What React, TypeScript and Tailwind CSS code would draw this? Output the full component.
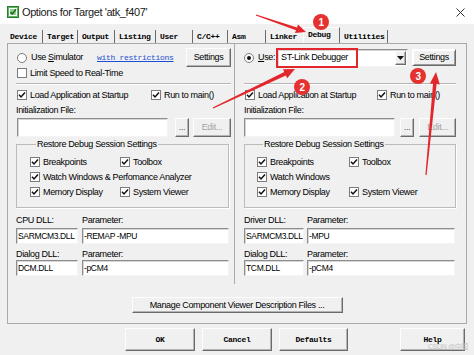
const ui = "font-['Liberation_Sans',Arial,sans-serif] text-[9px] tracking-[-0.35px] leading-none text-black";
const mono = "font-['Liberation_Mono','Courier_New',monospace] text-[8px] tracking-[-0.3px] leading-none";

const raised =
  'bg-[#f0f0f0] border border-t-[#fdfdfd] border-l-[#fdfdfd] border-r-[#6b6b6b] border-b-[#6b6b6b] shadow-[inset_-1px_-1px_0_#b4b4b4]';
const sunken =
  'bg-white border border-t-[#8d8d8d] border-l-[#8d8d8d] border-r-[#f4f4f4] border-b-[#f4f4f4] shadow-[inset_1px_1px_0_#d6d6d6]';

const tabs = [
  { name: 'Device', w: 'w-[37px]' },
  { name: 'Target', w: 'w-[35px]' },
  { name: 'Output', w: 'w-[37px]' },
  { name: 'Listing', w: 'w-[41px]' },
  { name: 'User', w: 'w-[37px]' },
  { name: 'C/C++', w: 'w-[35px]' },
  { name: 'Asm', w: 'w-[38px]' },
  { name: 'Linker', w: 'w-[37px]' },
  { name: 'Debug', w: 'w-[37px]', selected: true },
  { name: 'Utilities', w: 'w-[48px]' },
];

function CheckBox({ label, checked = true, className = '' }: { label: string; checked?: boolean; className?: string }) {
  return (
    <div className={`flex items-center h-[12px] ${className}`}>
      <span className="w-[10px] h-[10px] shrink-0 bg-white border border-[#7c7c7c] flex items-center justify-center">
        {checked && (
          <svg width="8" height="8" viewBox="0 0 8 8">
            <path d="M1 3.8 L3 6 L7 1.5" stroke="#111" strokeWidth="1.5" fill="none" />
          </svg>
        )}
      </span>
      <span className="ml-[3px] whitespace-nowrap">{label}</span>
    </div>
  );
}

function Radio({ children, checked = false, className = '' }: { children: React.ReactNode; checked?: boolean; className?: string }) {
  return (
    <div className={`flex items-center ${className}`}>
      <span className="w-[10px] h-[10px] shrink-0 rounded-full bg-white border border-[#7c7c7c] flex items-center justify-center">
        {checked && <span className="w-[4px] h-[4px] rounded-full bg-[#111]" />}
      </span>
      <span className="ml-[4px] whitespace-nowrap">{children}</span>
    </div>
  );
}

function Btn({ children, className = '' }: { children: React.ReactNode; className?: string }) {
  return <div className={`flex items-center justify-center shrink-0 ${raised} ${className}`}>{children}</div>;
}

function Field({ value, className = '' }: { value?: string; className?: string }) {
  return (
    <div className={`flex items-center pl-[1px] shrink-0 overflow-hidden whitespace-nowrap text-[8.5px] ${sunken} ${className}`}>
      {value}
    </div>
  );
}

function RestoreGroup({ wide, colW, w, pl }: { wide: string; colW: string; w: string; pl: string }) {
  return (
    <fieldset className={`mt-[3px] ${w} border border-[#bcbcbc] ${pl} pb-[9px] shadow-[1px_1px_0_#fff]`}>
      <legend className="ml-[6px] px-[1px]">Restore Debug Session Settings</legend>
      <div className={`mt-[7px] grid ${colW} gap-y-[3px]`}>
        <CheckBox label="Breakpoints" />
        <CheckBox label="Toolbox" />
        <CheckBox label={wide} className="col-span-2" />
        <CheckBox label="Memory Display" />
        <CheckBox label="System Viewer" />
      </div>
    </fieldset>
  );
}

function KeilIcon() {
  return (
    <svg width="12" height="12" viewBox="0 0 12 12">
      <rect x="0.5" y="0.5" width="11" height="11" fill="#5cb85c" stroke="#2d7a2d" />
      <rect x="2.5" y="2.5" width="7" height="7" fill="#8fd18f" stroke="#ffffff" />
      <path d="M3.5 6 L5.3 8 L9 3.2" stroke="#1f5f1f" strokeWidth="1.4" fill="none" />
    </svg>
  );
}

export default function App() {
  return (
    <div className={`relative w-[474px] h-[355px] overflow-hidden bg-[#f0f0f0] ${ui}`}>
      {/* title bar */}
      <div className="h-[24px] bg-white flex items-center pl-[7px] pr-[9px]">
        <KeilIcon />
        <span className="ml-[3px] text-[11px] tracking-[-0.4px] text-[#1b1b1b]">Options for Target 'atk_f407'</span>
        <svg className="ml-auto" width="9" height="9" viewBox="0 0 9 9">
          <path d="M0.5 0.5 L8.5 8.5 M8.5 0.5 L0.5 8.5" stroke="#333" strokeWidth="1" />
        </svg>
      </div>

      {/* tab strip */}
      <div className={`h-[19px] flex items-end pl-[6px] ${mono} font-bold`}>
        {tabs.map((t, i) => {
          const nextSel = tabs[i + 1]?.selected;
          if (t.selected) {
            return (
              <div
                key={t.name}
                className={`${t.w} h-[16px] pl-[4px] pb-[4px] flex items-end bg-[#f0f0f0] border-t border-l border-r border-t-white border-l-white border-r-[#6b6b6b]`}
              >
                {t.name}
              </div>
            );
          }
          return (
            <div
              key={t.name}
              className={`${t.w} h-[13px] pl-[4px] flex items-center ${nextSel ? '' : 'border-r border-[#6b6b6b]'}`}
            >
              {t.name}
            </div>
          );
        })}
      </div>

      {/* main panel */}
      <div className="ml-[7px] w-[460px] border border-[#a9a9a9] pb-[10px]">
        <div className="flex">
          {/* left half */}
          <div className="w-[227px] border-r border-[#a9a9a9] pl-[8px] pr-[3px] pt-[4px] pb-[8px] flex flex-col">
            <div className="h-[19px] flex items-center">
              <Radio className="ml-[1px] w-[80px]">
                Use <u>S</u>imulator
              </Radio>
              <span className={`${mono} text-[#1a4fd0] underline`}>with restrictions</span>
              <Btn className="ml-auto w-[45px] h-[19px]">Settings</Btn>
            </div>
            <CheckBox label="Limit Speed to Real-Time" checked={false} className="ml-[1px]" />
            <div className="mt-[4px] h-[2px] border-t border-[#b5b5b5] border-b border-b-white" />
            <div className="mt-[4px] grid grid-cols-[135px_auto]">
              <CheckBox label="Load Application at Startup" className="ml-[1px]" />
              <CheckBox label="Run to main()" />
            </div>
            <div className="mt-[3px] h-[12px] flex items-center">Initialization File:</div>
            <div className="mt-[2px] flex">
              <Field className="ml-[1px] w-[151px] h-[19px]" />
              <Btn className="ml-[7px] w-[14px] h-[19px] text-[#555]">...</Btn>
              <Btn className="ml-[4px] w-[38px] h-[19px] text-[#a3a3a3]">Edit...</Btn>
            </div>
            <RestoreGroup wide="Watch Windows & Perfomance Analyzer" colW="grid-cols-[90px_1fr]" w="w-[213px]" pl="pl-[13px]" />
            <div className="mt-[6px] h-[12px] flex items-center">
              <span className="w-[66px]">CPU DLL:</span>
              <span>Parameter:</span>
            </div>
            <div className="mt-[2px] flex gap-[4px]">
              <Field value="SARMCM3.DLL" className="w-[62px] h-[16px]" />
              <Field value="-REMAP -MPU" className="w-[147px] h-[16px]" />
            </div>
            <div className="mt-[5px] h-[11px] flex items-center">
              <span className="w-[66px]">Dialog DLL:</span>
              <span>Parameter:</span>
            </div>
            <div className="flex gap-[4px]">
              <Field value="DCM.DLL" className="w-[62px] h-[16px]" />
              <Field value="-pCM4" className="w-[147px] h-[16px]" />
            </div>
          </div>

          {/* right half */}
          <div className="flex-1 pl-[9px] pr-[10px] pt-[4px] pb-[8px] flex flex-col">
            <div className="h-[19px] flex items-center">
              <Radio checked className="w-[33px]">
                <u>U</u>se:
              </Radio>
              <div className={`w-[131px] h-[18px] flex items-center ${sunken}`}>
                <span className="pl-[3px] flex-1 whitespace-nowrap">ST-Link Debugger</span>
                <span className={`w-[11px] h-[14px] mr-[1px] flex items-center justify-center ${raised}`}>
                  <svg width="7" height="4" viewBox="0 0 7 4">
                    <path d="M0 0 L7 0 L3.5 4 Z" fill="#111" />
                  </svg>
                </span>
              </div>
              <Btn className="ml-[4px] w-[44px] h-[17px] border-[#3a3a3a] border-t-[#3a3a3a] border-l-[#3a3a3a] shadow-[inset_1px_1px_0_#fff,inset_-1px_-1px_0_#9a9a9a]">
                Settings
              </Btn>
            </div>
            <div className="h-[12px]" />
            <div className="mt-[4px] h-[2px] border-t border-[#b5b5b5] border-b border-b-white" />
            <div className="mt-[4px] grid grid-cols-[133px_auto]">
              <CheckBox label="Load Application at Startup" className="ml-[1px]" />
              <CheckBox label="Run to main()" />
            </div>
            <div className="mt-[3px] h-[12px] flex items-center">Initialization File:</div>
            <div className="mt-[2px] flex">
              <Field className="w-[151px] h-[19px]" />
              <Btn className="ml-[5px] w-[14px] h-[19px] text-[#555]">...</Btn>
              <Btn className="ml-[5px] w-[37px] h-[19px] text-[#a3a3a3]">Edit...</Btn>
            </div>
            <RestoreGroup wide="Watch Windows" colW="grid-cols-[92px_1fr]" w="w-[212px]" pl="pl-[12px]" />
            <div className="mt-[6px] h-[12px] flex items-center">
              <span className="w-[63px]">Driver DLL:</span>
              <span>Parameter:</span>
            </div>
            <div className="mt-[2px] flex gap-[3px]">
              <Field value="SARMCM3.DLL" className="w-[60px] h-[16px]" />
              <Field value="-MPU" className="w-[148px] h-[16px]" />
            </div>
            <div className="mt-[5px] h-[11px] flex items-center">
              <span className="w-[63px]">Dialog DLL:</span>
              <span>Parameter:</span>
            </div>
            <div className="flex gap-[3px]">
              <Field value="TCM.DLL" className="w-[60px] h-[16px]" />
              <Field value="-pCM4" className="w-[148px] h-[16px]" />
            </div>
          </div>
        </div>

        <Btn className="mx-auto mt-[13px] w-[211px] h-[16px]">Manage Component Viewer Description Files ...</Btn>
      </div>

      {/* dialog buttons */}
      <div className={`mt-[4px] flex pl-[125px] ${mono} font-bold`}>
        <Btn className="w-[70px] h-[23px]">OK</Btn>
        <Btn className="ml-[7px] w-[70px] h-[23px]">Cancel</Btn>
        <Btn className="ml-[7px] w-[69px] h-[23px]">Defaults</Btn>
        <Btn className="ml-[52px] w-[65px] h-[23px]">Help</Btn>
      </div>

      {/* watermark */}
      <span className="absolute right-[6px] bottom-[5px] text-[7px] text-[#c4c4c4] font-['Liberation_Sans','Noto_Sans_CJK_SC',sans-serif]">
        CSDN @中国
      </span>

      {/* red annotations */}
      <svg className="absolute inset-0 pointer-events-none" width="474" height="355" viewBox="0 0 474 355">
        <rect x="277" y="49" width="80" height="18" fill="none" stroke="#e3262b" strokeWidth="2" />
        <polygon points="255.8,15.5 296,30.2 295,33.1 306,32 298,24.5 297,27.4 256.2,14.5" fill="#e3262b" />
        <polygon points="213.3,108.5 285.8,75.4 287.2,78.2 295,69 282.9,69.2 284.3,72.1 212.7,107.5" fill="#e3262b" />
        <polygon points="426.6,175 436.6,84.1 439.8,84.4 436,72 429.9,83.5 433,83.8 425.4,175" fill="#e3262b" />
        <circle cx="321" cy="22" r="8" fill="#e5312f" />
        <circle cx="302" cy="87" r="8" fill="#e5312f" />
        <circle cx="418" cy="76" r="8" fill="#e5312f" />
        <g fill="#fff" fontFamily="Liberation Sans, Arial, sans-serif" fontSize="10" fontWeight="bold" textAnchor="middle">
          <text x="321" y="25.5">1</text>
          <text x="302" y="90.5">2</text>
          <text x="418" y="79.5">3</text>
        </g>
      </svg>
    </div>
  );
}
